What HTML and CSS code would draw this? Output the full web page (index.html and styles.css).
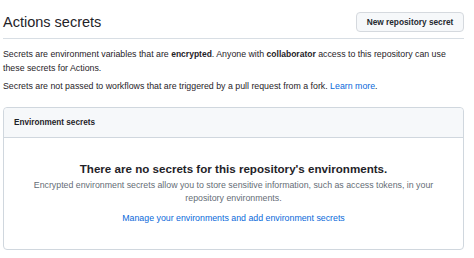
FILE: index.html
```html
<!DOCTYPE html>
<html lang="en">
<head>
    <meta charset="UTF-8">
    <meta name="viewport" content="width=device-width, initial-scale=1.0">
    <title>Actions secrets</title>
    <link rel="stylesheet" href="styles.css">
</head>
<body>
    <div class="page">
        <div class="subhead">
            <h2 class="subhead-title">Actions secrets</h2>
            <button class="btn">New repository secret</button>
        </div>

        <p class="intro first">Secrets are environment variables that are <strong>encrypted</strong>. Anyone with <strong>collaborator</strong> access to this repository can use these secrets for Actions.</p>
        <p class="intro">Secrets are not passed to workflows that are triggered by a pull request from a fork. <a href="#">Learn more</a>.</p>

        <div class="box">
            <div class="box-header">Environment secrets</div>
            <div class="blankslate">
                <h3>There are no secrets for this repository's environments.</h3>
                <p>Encrypted environment secrets allow you to store sensitive information, such as access tokens, in your repository environments.</p>
                <a href="#">Manage your environments and add environment secrets</a>
            </div>
        </div>
    </div>
</body>
</html>
```

FILE: styles.css
```css
body {
    margin: 0;
    font-family: "Liberation Sans", Arial, sans-serif;
    font-size: 8.8px;
    line-height: 14px;
    color: #1f2328;
    background: #fff;
}

a {
    color: #0969da;
    text-decoration: none;
}

strong {
    font-size: 8.5px;
}

.page {
    padding: 0 10px 0 3px;
}

.subhead {
    display: flex;
    justify-content: space-between;
    align-items: center;
    padding-top: 12px;
    padding-bottom: 6px;
    border-bottom: 1px solid #d8dee4;
}

.subhead-title {
    margin: 0;
    font-size: 14.5px;
    font-weight: 400;
    line-height: 20px;
}

.btn {
    font-family: inherit;
    font-size: 8.3px;
    font-weight: 600;
    color: #24292f;
    background: #f6f8fa;
    border: 1px solid #d5d9de;
    border-radius: 4px;
    height: 20px;
    width: 108px;
    padding: 0;
}

.intro {
    margin: 4px 0 0;
}

.intro.first {
    margin-top: 8px;
}

.box {
    margin-top: 14px;
    border: 1px solid #d0d7de;
    border-radius: 4px;
}

.box-header {
    background: #f6f8fa;
    border-bottom: 1px solid #d0d7de;
    border-radius: 4px 4px 0 0;
    padding: 8px 10px 7px;
    font-weight: 600;
    font-size: 8.2px;
}

.blankslate {
    text-align: center;
    padding: 23px 25px 24px;
}

.blankslate h3 {
    margin: 0;
    font-size: 11.6px;
    line-height: 16px;
    font-weight: 600;
}

.blankslate p {
    margin: 2px 0 0;
    line-height: 13px;
    color: #656d76;
}

.blankslate a {
    display: inline-block;
    margin-top: 6px;
}
```
